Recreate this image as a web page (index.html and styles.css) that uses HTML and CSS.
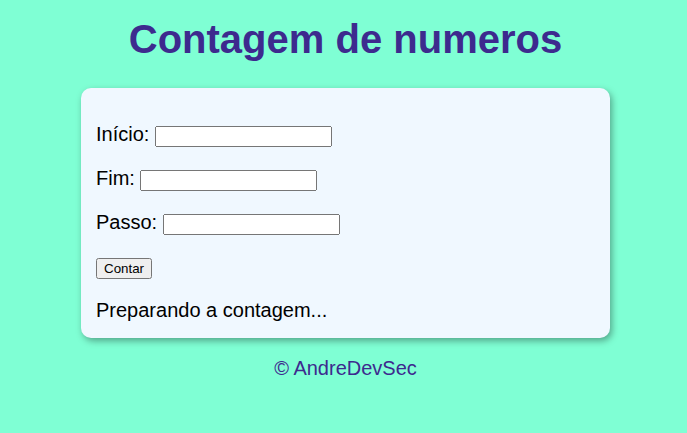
FILE: index.html
```html
<!DOCTYPE html>
<html>
  <head>
    <title>Contagem de numeros</title>
    <meta charset="UTF-8" />
    <link rel="stylesheet" href="styles.css">
  </head>

  <body>
    <header>
      <h1>Contagem de numeros</h1>
    </header>
    <section class="card">
      <p class="field">
        <label for="txti">Início:</label>
        <input type="text" id="txti">
      </p>
      <p class="field">
        <label for="txtf">Fim:</label>
        <input type="text" id="txtf">
      </p>
      <p class="field">
        <label for="txtp">Passo:</label>
        <input type="text" id="txtp">
      </p>
      <div class="actions">
        <input type="button" value="Contar">
      </div>
      <div id="res">Preparando a contagem...</div>
    </section>
    <footer>
      <p>&copy; AndreDevSec</p>
    </footer>
  </body>
</html>
```

FILE: styles.css
```css
body {
  background: aquamarine;
  font-family: "Liberation Sans", Arial, sans-serif;
  margin: 8px 6px 8px 10px;
}
header {
  color: #3d2a8e;
  text-align: center;
}
h1 {
  font-size: 40px;
  margin: 9px 0 26px;
}
.card {
  background: aliceblue;
  width: 499px;
  margin: auto;
  padding: 15px 15px 16px;
  border-radius: 10px;
  box-shadow: 2px 3px 7px rgba(0, 0, 0, 0.35);
  font-size: 20px;
}
.field {
  margin: 20px 0;
}
.field input {
  width: 177px;
  height: 21px;
  box-sizing: border-box;
}
.actions {
  margin-top: 23px;
}
.actions input {
  display: block;
  height: 21px;
}
#res {
  margin-top: 20px;
}
footer {
  color: #3d2a8e;
  text-align: center;
  font-size: 20px;
}
footer p {
  margin: 19px 0;
}
```
